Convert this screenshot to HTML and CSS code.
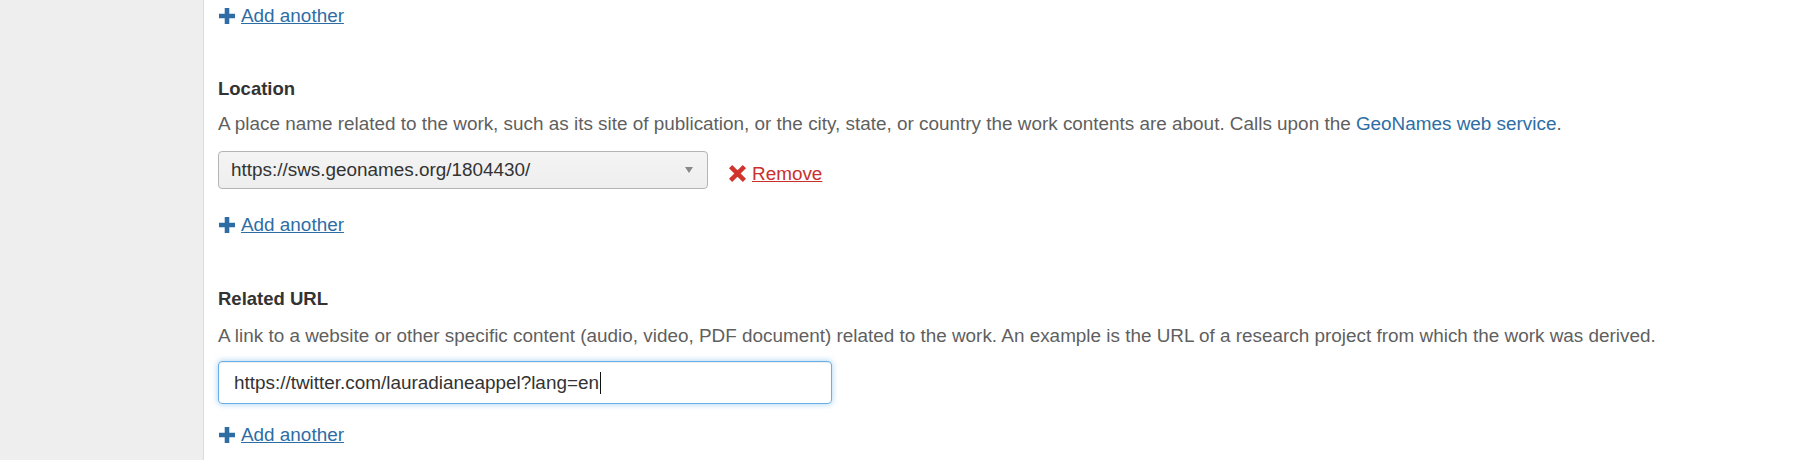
FILE: index.html
```html
<!DOCTYPE html>
<html lang="en">
<head>
<meta charset="utf-8">
<title>Edit work</title>
<link rel="stylesheet" href="styles.css">
</head>
<body>
<div class="page">
  <aside class="sidebar"></aside>
  <main class="main">
    <div class="add-row first">
      <svg class="plus" viewBox="0 0 14 14"><path d="M5 0h4v5h5v4H9v5H5V9H0V5h5z"/></svg>
      <a href="#" class="link">Add another</a>
    </div>

    <section class="field loc">
      <h3 class="label">Location</h3>
      <p class="help">A place name related to the work, such as its site of publication, or the city, state, or country the work contents are about. Calls upon the <a href="#" class="plain-link">GeoNames web service</a>.</p>
      <div class="value-row">
        <div class="select">
          <span class="select-text">https://sws.geonames.org/1804430/</span>
          <span class="arrow"></span>
        </div>
        <a href="#" class="remove">
          <svg class="x" viewBox="0 0 14 14"><path d="M2.6 0L7 4.4 11.4 0 14 2.6 9.6 7 14 11.4 11.4 14 7 9.6 2.6 14 0 11.4 4.4 7 0 2.6z"/></svg>
          <span class="remove-text">Remove</span>
        </a>
      </div>
      <div class="add-row">
        <svg class="plus" viewBox="0 0 14 14"><path d="M5 0h4v5h5v4H9v5H5V9H0V5h5z"/></svg>
        <a href="#" class="link">Add another</a>
      </div>
    </section>

    <section class="field url">
      <h3 class="label">Related URL</h3>
      <p class="help">A link to a website or other specific content (audio, video, PDF document) related to the work. An example is the URL of a research project from which the work was derived.</p>
      <div class="input"><span>https://twitter.com/lauradianeappel?lang=en</span><span class="caret"></span></div>
      <div class="add-row">
        <svg class="plus" viewBox="0 0 14 14"><path d="M5 0h4v5h5v4H9v5H5V9H0V5h5z"/></svg>
        <a href="#" class="link">Add another</a>
      </div>
    </section>
  </main>
</div>
</body>
</html>
```
FILE: styles.css
```css
html, body {
  margin: 0;
  padding: 0;
  background: #fff;
}
body {
  font-family: "Liberation Sans", Arial, sans-serif;
  font-size: 18.9px;
  color: #333;
}
.page {
  display: flex;
  height: 460px;
  overflow: hidden;
}
.sidebar {
  width: 203px;
  flex: none;
  background: #eeeeee;
  border-right: 1px solid #dcdcdc;
}
.main {
  flex: 1;
  padding-left: 14px;
}
.add-row {
  display: flex;
  align-items: center;
  gap: 6px;
  height: 22px;
  margin-top: 25px;
}
.add-row.first {
  margin-top: 5px;
}
.plus {
  width: 16px;
  height: 16px;
  fill: #2e6da4;
  margin-left: 1px;
}
.link {
  color: #2e6da4;
  text-decoration: underline;
}
.plain-link {
  color: #2e6da4;
  text-decoration: none;
}
.field.loc {
  margin-top: 51px;
}
.field.url {
  margin-top: 52px;
}
.field.url .add-row {
  margin-top: 20px;
}
.label {
  margin: 0;
  font-size: 18.5px;
  font-weight: bold;
  line-height: 22px;
  color: #333;
}
.help {
  margin: 13px 0 0;
  line-height: 22px;
  color: #5f5f5f;
}
.field.url .help {
  margin-top: 15px;
}
.value-row {
  display: flex;
  align-items: center;
  margin-top: 16px;
}
.select {
  width: 490px;
  height: 38px;
  box-sizing: border-box;
  border: 1px solid #b4b4b4;
  border-radius: 4px;
  background: linear-gradient(#f4f4f4, #eeeeee);
  display: flex;
  align-items: center;
  padding: 0 14px 0 12px;
  color: #333;
}
.select-text {
  flex: 1;
}
.arrow {
  width: 0;
  height: 0;
  border-left: 4px solid transparent;
  border-right: 4px solid transparent;
  border-top: 6px solid #888;
}
.remove {
  display: flex;
  align-items: center;
  gap: 6px;
  margin-left: 21px;
  margin-top: 7px;
  color: #c9302c;
  text-decoration: none;
}
.x {
  width: 17px;
  height: 17px;
  fill: #d0342c;
}
.remove-text {
  text-decoration: underline;
}
.input {
  margin-top: 14px;
  width: 614px;
  height: 43px;
  box-sizing: border-box;
  border: 1px solid #66afe9;
  border-radius: 4px;
  box-shadow: inset 0 1px 1px rgba(0,0,0,.075), 0 0 6px rgba(102,175,233,.6);
  display: flex;
  align-items: center;
  padding: 0 15px;
  color: #333;
}
.caret {
  width: 1px;
  height: 22px;
  background: #111;
  margin-left: 1px;
}
```
